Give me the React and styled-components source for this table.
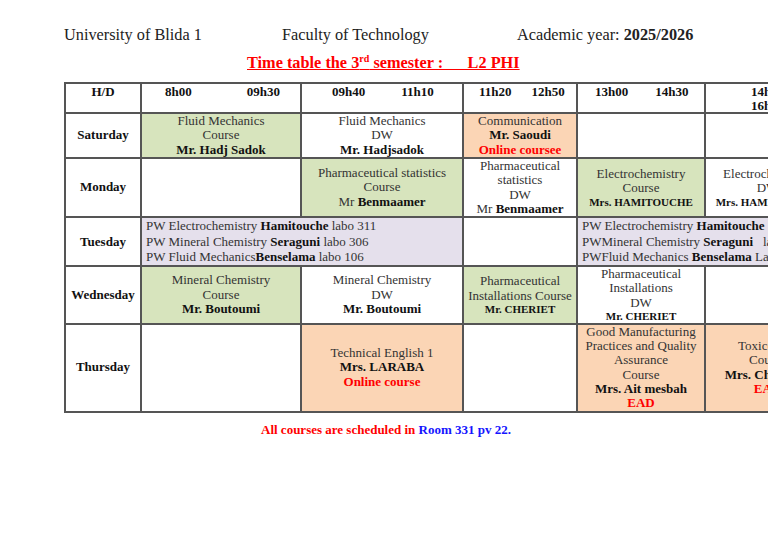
import React from 'react';
import styled, { createGlobalStyle } from 'styled-components';

const GlobalStyle = createGlobalStyle`
  html, body {
    margin: 0;
    padding: 0;
    overflow: hidden;
    background: #fff;
  }
  body {
    font-family: "Liberation Serif", "Times New Roman", serif;
    color: #222;
  }
`;

const Page = styled.div`
  width: 900px;
  padding: 25px 0 0 64px;
`;

const TopLine = styled.div`
  display: grid;
  grid-template-columns: 218px 235px auto;
  font-size: 16.3px;
  line-height: 20px;
  color: #222;
`;

const Title = styled.div`
  margin: 8px 0 0 183px;
  font-size: 16.3px;
  line-height: 20px;
  font-weight: bold;
  color: #f00;
  text-decoration: underline;
  white-space: pre;

  sup {
    font-size: 10px;
    line-height: 0;
  }
`;

const Table = styled.table`
  margin-top: 9px;
  border-collapse: collapse;
  table-layout: fixed;
  width: 765px;
  font-size: 13px;
  line-height: 14.3px;

  td, th {
    border: 2px solid #555;
    padding: 0 3px;
  }
`;

const Row = styled.tr`
  height: ${p => p.$h}px;
`;

const HeadCell = styled.th`
  vertical-align: top;
  text-align: center;
  font-weight: bold;
  line-height: 13.5px;
  padding-top: 1px !important;
  color: #111;
`;

const Times = styled.div`
  display: flex;
  gap: ${p => p.$gap}px;
  padding-left: ${p => p.$pad}px;
`;

const DayCell = styled.td`
  text-align: center;
  font-weight: bold;
  color: #111;
`;

const Cell = styled.td`
  background: ${p => p.$bg || '#fff'};
  text-align: center;
  vertical-align: middle;
  color: #333;
`;

const PwCell = styled.td`
  background: #e5e0ec;
  vertical-align: top;
  line-height: 15.5px;
  color: #333;
  white-space: pre;
  overflow: hidden;
  padding: 0 4px !important;
`;

const Line = styled.div`
  white-space: nowrap;
`;

const Name = styled.div`
  font-weight: bold;
  color: #111;
  font-size: ${p => p.$small ? '11px' : '13px'};
  line-height: ${p => p.$small ? '12.5px' : '14.3px'};
  white-space: nowrap;
`;

const B = styled.b`
  color: #111;
`;

const Alert = styled.div`
  font-weight: bold;
  color: #f00;
`;

const Footer = styled.div`
  margin: 9px 0 0 197px;
  font-size: 13px;
  font-weight: bold;
  color: #f00;

  span {
    color: #1515ff;
  }
`;

const GREEN = '#d7e4bd';
const ORANGE = '#fbd5b5';

export default function App() {
  return (
    <>
      <GlobalStyle />
      <Page>
        <TopLine>
          <div>University of Blida 1</div>
          <div>Faculty of Technology</div>
          <div>Academic year: <b>2025/2026</b></div>
        </TopLine>
        <Title>Time table the 3<sup>rd</sup> semester :      L2 PHI</Title>

        <Table>
          <colgroup>
            <col style={{ width: 76 }} />
            <col style={{ width: 160 }} />
            <col style={{ width: 162 }} />
            <col style={{ width: 114 }} />
            <col style={{ width: 128 }} />
            <col style={{ width: 125 }} />
          </colgroup>
          <tbody>
            <Row $h={30}>
              <HeadCell>H/D</HeadCell>
              <HeadCell><Times $pad={20} $gap={55}><span>8h00</span><span>09h30</span></Times></HeadCell>
              <HeadCell><Times $pad={27} $gap={36}><span>09h40</span><span>11h10</span></Times></HeadCell>
              <HeadCell><Times $pad={12} $gap={20}><span>11h20</span><span>12h50</span></Times></HeadCell>
              <HeadCell><Times $pad={14} $gap={27}><span>13h00</span><span>14h30</span></Times></HeadCell>
              <HeadCell>14h40<br />16h10</HeadCell>
            </Row>

            <Row $h={45}>
              <DayCell>Saturday</DayCell>
              <Cell $bg={GREEN}>
                <Line>Fluid Mechanics</Line>
                <Line>Course</Line>
                <Name>Mr. Hadj Sadok</Name>
              </Cell>
              <Cell>
                <Line>Fluid Mechanics</Line>
                <Line>DW</Line>
                <Name>Mr. Hadjsadok</Name>
              </Cell>
              <Cell $bg={ORANGE}>
                <Line>Communication</Line>
                <Name>Mr. Saoudi</Name>
                <Alert>Online coursee</Alert>
              </Cell>
              <Cell />
              <Cell />
            </Row>

            <Row $h={58}>
              <DayCell>Monday</DayCell>
              <Cell />
              <Cell $bg={GREEN}>
                <Line>Pharmaceutical statistics</Line>
                <Line>Course</Line>
                <Line>Mr <B>Benmaamer</B></Line>
              </Cell>
              <Cell>
                <Line>Pharmaceutical</Line>
                <Line>statistics</Line>
                <Line>DW</Line>
                <Line>Mr <B>Benmaamer</B></Line>
              </Cell>
              <Cell $bg={GREEN}>
                <Line>Electrochemistry</Line>
                <Line>Course</Line>
                <Name $small>Mrs. HAMITOUCHE</Name>
              </Cell>
              <Cell>
                <Line>Electrochemistry</Line>
                <Line>DW</Line>
                <Name $small>Mrs. HAMITOUCHE</Name>
              </Cell>
            </Row>

            <Row $h={49}>
              <DayCell>Tuesday</DayCell>
              <PwCell colSpan={2}>
                <div>PW Electrochemistry <B>Hamitouche</B> labo 311</div>
                <div>PW Mineral Chemistry <B>Seraguni</B> labo 306</div>
                <div>PW Fluid Mechanics<B>Benselama</B> labo 106</div>
              </PwCell>
              <Cell />
              <PwCell colSpan={2}>
                <div>PW Electrochemistry <B>Hamitouche</B>  labo 311</div>
                <div>PWMineral Chemistry <B>Seraguni</B>   labo 306</div>
                <div>PWFluid Mechanics <B>Benselama</B> Labo 106</div>
              </PwCell>
            </Row>

            <Row $h={57}>
              <DayCell>Wednesday</DayCell>
              <Cell $bg={GREEN}>
                <Line>Mineral Chemistry</Line>
                <Line>Course</Line>
                <Name>Mr. Boutoumi</Name>
              </Cell>
              <Cell>
                <Line>Mineral Chemistry</Line>
                <Line>DW</Line>
                <Name>Mr. Boutoumi</Name>
              </Cell>
              <Cell $bg={GREEN}>
                <Line>Pharmaceutical</Line>
                <Line>Installations Course</Line>
                <Name $small>Mr. CHERIET</Name>
              </Cell>
              <Cell>
                <Line>Pharmaceutical</Line>
                <Line>Installations</Line>
                <Line>DW</Line>
                <Name $small>Mr. CHERIET</Name>
              </Cell>
              <Cell />
            </Row>

            <Row $h={88}>
              <DayCell>Thursday</DayCell>
              <Cell />
              <Cell $bg={ORANGE}>
                <Line>Technical English 1</Line>
                <Name>Mrs. LARABA</Name>
                <Alert>Online course</Alert>
              </Cell>
              <Cell />
              <Cell $bg={ORANGE}>
                <Line>Good Manufacturing</Line>
                <Line>Practices and Quality</Line>
                <Line>Assurance</Line>
                <Line>Course</Line>
                <Name>Mrs. Ait mesbah</Name>
                <Alert>EAD</Alert>
              </Cell>
              <Cell $bg={ORANGE}>
                <Line>Toxicology</Line>
                <Line>Course</Line>
                <Name>Mrs. Chekroun</Name>
                <Alert>EAD</Alert>
              </Cell>
            </Row>
          </tbody>
        </Table>

        <Footer>All courses are scheduled in <span>Room 331 pv 22.</span></Footer>
      </Page>
    </>
  );
}
